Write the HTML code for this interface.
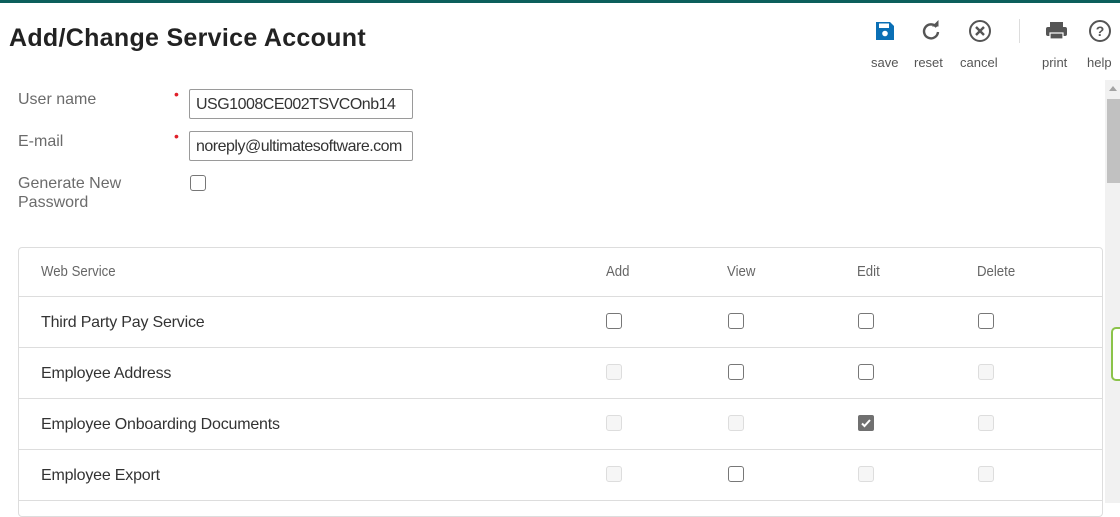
<!DOCTYPE html>
<html><head><style>
body{margin:0;width:1120px;height:503px;overflow:hidden;background:#fff;font-family:"Liberation Sans",sans-serif;position:relative}
.a{position:absolute}
.topbar{left:0;top:0;width:1120px;height:3px;background:#0c5f5c}
h1{position:absolute;left:9px;top:24px;margin:0;font-size:25px;font-weight:bold;color:#222;letter-spacing:0.3px}
.lbl{position:absolute;color:#6b6b6b;font-size:16px;line-height:19px}
.req{position:absolute;color:#e0202a;font-size:14px}
.inp{position:absolute;left:189px;height:30px;border:1px solid #9a9a9a;border-radius:2px;font-size:16px;letter-spacing:-0.5px;color:#333;line-height:30px;padding-left:6px;box-sizing:border-box;width:224px;overflow:hidden;white-space:nowrap}
.cb{position:absolute;width:16px;height:16px;border:1.3px solid #777;border-radius:3px;box-sizing:border-box}
.dis{border-color:#ddd;background:#f6f6f6}
.tbl{left:18px;top:247px;width:1085px;height:270px;border:1px solid #ddd;border-radius:4px;box-sizing:border-box}
.line{position:absolute;left:19px;width:1083px;height:1px;background:#ddd}
.th{position:absolute;top:263px;font-size:15px;color:#666;transform:scaleX(.88);transform-origin:left}
.td{position:absolute;left:41px;font-size:16px;color:#333;letter-spacing:-0.2px}
.tl{position:absolute;font-size:13px;color:#555;top:55px}
</style></head><body>
<div class="a topbar"></div>
<h1>Add/Change Service Account</h1>

<svg class="a" style="left:875px;top:21px" width="20" height="20" viewBox="0 0 20 20"><path d="M1 1h14l4 4v14H1z" fill="#0a6fb5"/><rect x="4" y="2.5" width="10" height="4.5" fill="#fff"/><circle cx="10" cy="12.5" r="2.8" fill="#fff"/></svg>
<svg class="a" style="left:919px;top:19px" width="24" height="24" viewBox="0 0 24 24"><path d="M17.5 8A7 7 0 1 0 19 13" fill="none" stroke="#555" stroke-width="2.4"/><path d="M13 7.5h6.5v-6.5z" fill="#555"/></svg>
<svg class="a" style="left:968px;top:19px" width="24" height="24" viewBox="0 0 24 24"><circle cx="12" cy="12" r="10" fill="none" stroke="#555" stroke-width="2"/><path d="M8 8l8 8M16 8l-8 8" stroke="#555" stroke-width="2.4"/></svg>
<div class="a" style="left:1019px;top:19px;width:1px;height:24px;background:#ddd"></div>
<svg class="a" style="left:1044px;top:20px" width="26" height="22" viewBox="0 0 26 22"><rect x="6" y="2" width="13" height="5" fill="#555"/><rect x="2" y="7" width="21" height="9" rx="2" fill="#555"/><rect x="6" y="13" width="13" height="6" fill="#555" stroke="#fff" stroke-width="1.2"/></svg>
<svg class="a" style="left:1088px;top:19px" width="24" height="24" viewBox="0 0 24 24"><circle cx="12" cy="12" r="10" fill="none" stroke="#555" stroke-width="2"/><text x="12" y="17" font-size="14" font-weight="bold" text-anchor="middle" fill="#555" font-family="Liberation Sans">?</text></svg>
<div class="tl" style="left:871px">save</div>
<div class="tl" style="left:914px">reset</div>
<div class="tl" style="left:960px">cancel</div>
<div class="tl" style="left:1042px">print</div>
<div class="tl" style="left:1087px">help</div>

<div class="lbl" style="left:18px;top:90px">User name</div>
<div class="lbl" style="left:18px;top:132px">E-mail</div>
<div class="lbl" style="left:18px;top:174px">Generate New<br>Password</div>
<div class="req" style="left:174px;top:86px">•</div>
<div class="req" style="left:174px;top:128px">•</div>
<div class="inp" style="top:89px">USG1008CE002TSVCOnb14</div>
<div class="inp" style="top:131px">noreply@ultimatesoftware.com</div>
<div class="cb" style="left:190px;top:175px"></div>

<div class="a tbl"></div>
<div class="th" style="left:41px">Web Service</div>
<div class="th" style="left:606px">Add</div>
<div class="th" style="left:727px">View</div>
<div class="th" style="left:857px">Edit</div>
<div class="th" style="left:977px">Delete</div>
<div class="line" style="top:296px"></div>
<div class="line" style="top:347px"></div>
<div class="line" style="top:398px"></div>
<div class="line" style="top:449px"></div>
<div class="line" style="top:500px"></div>
<div class="td" style="top:314px">Third Party Pay Service</div>
<div class="td" style="top:365px">Employee Address</div>
<div class="td" style="top:416px">Employee Onboarding Documents</div>
<div class="td" style="top:467px">Employee Export</div>

<div class="cb" style="left:606px;top:313px"></div>
<div class="cb" style="left:728px;top:313px"></div>
<div class="cb" style="left:858px;top:313px"></div>
<div class="cb" style="left:978px;top:313px"></div>

<div class="cb dis" style="left:606px;top:364px"></div>
<div class="cb" style="left:728px;top:364px"></div>
<div class="cb" style="left:858px;top:364px"></div>
<div class="cb dis" style="left:978px;top:364px"></div>

<div class="cb dis" style="left:606px;top:415px"></div>
<div class="cb dis" style="left:728px;top:415px"></div>
<svg class="a" style="left:858px;top:415px" width="16" height="16" viewBox="0 0 16 16"><rect width="16" height="16" rx="2" fill="#707070"/><path d="M4 8.5l2.5 2.5L12 5" stroke="#fff" stroke-width="2" fill="none"/></svg>
<div class="cb dis" style="left:978px;top:415px"></div>

<div class="cb dis" style="left:606px;top:466px"></div>
<div class="cb" style="left:728px;top:466px"></div>
<div class="cb dis" style="left:858px;top:466px"></div>
<div class="cb dis" style="left:978px;top:466px"></div>

<div class="a" style="left:1105px;top:80px;width:15px;height:423px;background:#f1f1f1"></div>
<div class="a" style="left:1109px;top:86px;width:0;height:0;border-left:4px solid transparent;border-right:4px solid transparent;border-bottom:5px solid #a3a3a3"></div>
<div class="a" style="left:1107px;top:99px;width:13px;height:84px;background:#c1c1c1"></div>
<div class="a" style="left:1111px;top:327px;width:12px;height:50px;border:2px solid #8bc34a;border-radius:5px;background:#fff"></div>
</body></html>
